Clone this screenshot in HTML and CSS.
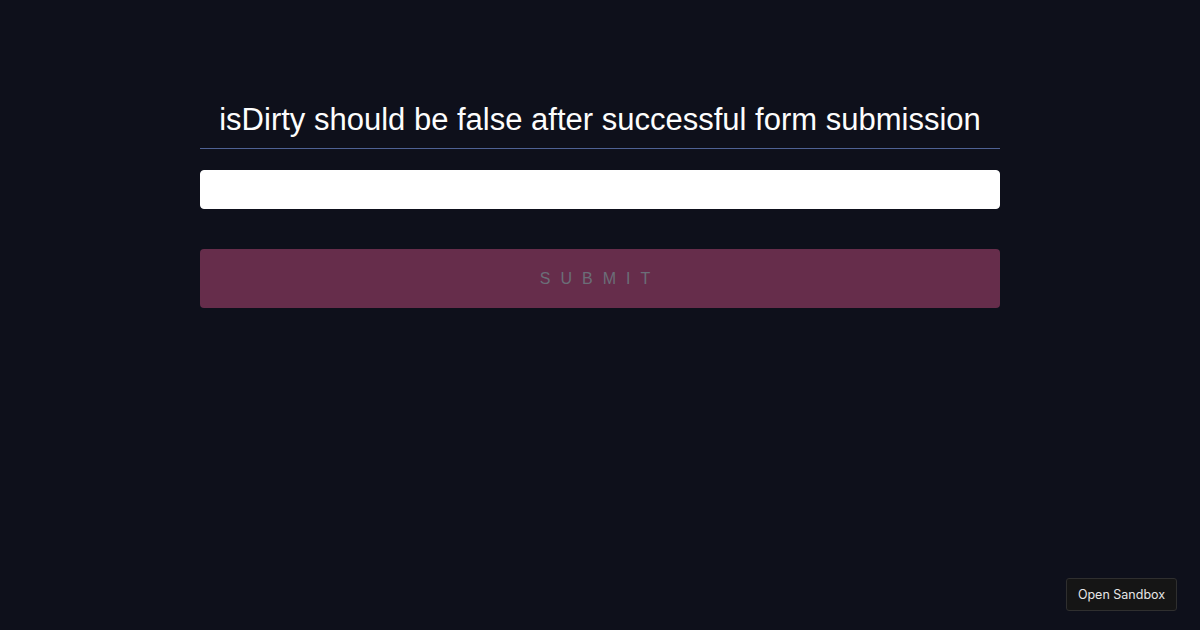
FILE: index.html
```html
<!DOCTYPE html>
<html lang="en">
<head>
    <meta charset="UTF-8">
    <meta name="viewport" content="width=device-width, initial-scale=1.0">
    <title>isDirty form</title>
    <link rel="stylesheet" href="styles.css">
</head>
<body>
    <form class="form">
        <h1 class="title">isDirty should be false after successful form submission</h1>
        <input class="field" type="text" name="firstName">
        <button class="submit" type="submit" disabled>Submit</button>
    </form>

    <a class="sandbox-btn" href="#">Open Sandbox</a>
</body>
</html>
```

FILE: styles.css
```css
html, body {
    margin: 0;
    padding: 0;
}
body {
    font-family: 'Liberation Sans', Arial, Helvetica, sans-serif;
    background: #0e101b;
    color: white;
    height: 630px;
    overflow: hidden;
}
.form {
    max-width: 800px;
    margin: 0 auto;
    padding-top: 101px;
}
.title {
    margin: 0 0 21px;
    padding-bottom: 10px;
    border-bottom: 1px solid #4f6294;
    font-size: 31px;
    font-weight: normal;
    line-height: 37px;
    text-align: center;
    color: #fdfdfd;
}
.field {
    display: block;
    box-sizing: border-box;
    width: 100%;
    height: 39px;
    border-radius: 4px;
    border: 1px solid white;
    background: white;
    padding: 10px 15px;
    font-size: 14px;
    margin: 0 0 40px;
}
.submit {
    display: block;
    width: 100%;
    height: 59px;
    border: none;
    border-radius: 4px;
    background: #662d4b;
    color: #6b6e78;
    font-family: 'Liberation Sans', Arial, sans-serif;
    font-size: 16px;
    text-transform: uppercase;
    letter-spacing: 10px;
    padding: 0;
}
.sandbox-btn {
    position: fixed;
    right: 23px;
    bottom: 19px;
    box-sizing: border-box;
    width: 111px;
    height: 33px;
    display: flex;
    align-items: center;
    justify-content: center;
    background: #151515;
    border: 1px solid #2f2f2f;
    border-radius: 3px;
    color: #e6e6e6;
    font-family: Inter, 'Noto Sans', sans-serif;
    font-size: 12.5px;
    text-decoration: none;
}
```
